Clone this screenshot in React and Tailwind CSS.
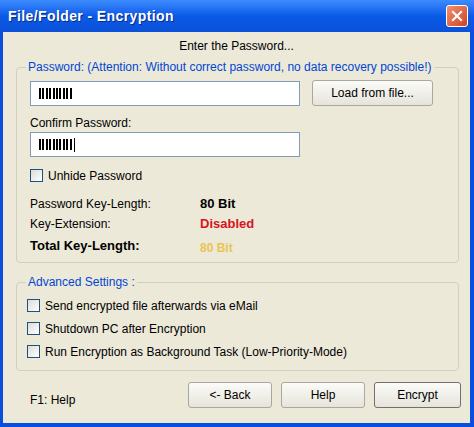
import React from "react";

function Checkbox() {
  return (
    <div className="w-[13px] h-[13px] shrink-0 border border-[#1c5180] bg-gradient-to-br from-[#dcdcd7] to-white" />
  );
}

function Masked({ count, caret }) {
  return (
    <div className="flex items-center gap-[1.4px]">
      {Array.from({ length: count }).map((_, i) => (
        <div key={i} className="w-[2px] h-[11px] bg-black" />
      ))}
      {caret && <div className="ml-[1px] w-[1px] h-[14px] bg-black" />}
    </div>
  );
}

function XpButton({ label, w, isDefault }) {
  return (
    <button
      className={`h-[26px] ${w} rounded-[3px] border ${
        isDefault ? "border-[#707070]" : "border-[#a8a8a0]"
      } bg-gradient-to-b from-[#fbfbf8] to-[#e6e4da] text-[12px] text-black`}
    >
      {label}
    </button>
  );
}

export default function App() {
  return (
    <div
      className="w-[474px] h-[427px] flex flex-col bg-[#0a4ee0] overflow-hidden text-black"
      style={{ fontFamily: '"Liberation Sans", Arial, sans-serif' }}
    >
      {/* title bar */}
      <div className="h-[32px] shrink-0 flex items-center justify-between pl-[8px] pr-[6px] bg-gradient-to-b from-[#3d8bff] via-[#0a5ae6] to-[#0b50d8]">
        <span className="text-white font-bold text-[14px] tracking-[0.4px] [text-shadow:1px_1px_0_#0a2a8a]">
          File/Folder - Encryption
        </span>
        <div className="w-[22px] h-[22px] rounded-[3px] border border-white bg-gradient-to-br from-[#f09070] to-[#d0401c] flex items-center justify-center">
          <svg width="12" height="12" viewBox="0 0 12 12">
            <path d="M2 2 L10 10 M10 2 L2 10" stroke="white" strokeWidth="2.2" strokeLinecap="square" />
          </svg>
        </div>
      </div>

      {/* body */}
      <div className="flex-1 ml-[3px] mr-[4px] mb-[4px] bg-[#ece9d8] flex flex-col text-[12px]">
        <div className="pt-[7px] leading-[14px] text-center">Enter the Password...</div>

        <fieldset className="mt-[7px] ml-[13px] w-[443px] border border-[#d0d0bf] rounded-[4px] pb-[7px]">
          <legend className="ml-[9px] px-[2px] leading-[14px] text-[#0046d5]">
            Password: (Attention: Without correct password, no data recovery possible!)
          </legend>
          <div className="pl-[13px] flex flex-col">
            <div className="mt-[6px] flex items-center gap-[12px]">
              <div className="w-[270px] h-[25px] border border-[#7f9db9] bg-white flex items-center pl-[8px]">
                <Masked count={10} />
              </div>
              <XpButton label="Load from file..." w="w-[121px]" />
            </div>
            <div className="mt-[10px] leading-[14px]">Confirm Password:</div>
            <div className="mt-[2px] w-[270px] h-[25px] border border-[#7f9db9] bg-white flex items-center pl-[8px]">
              <Masked count={10} caret />
            </div>
            <div className="mt-[12px] flex items-center gap-[5px] h-[13px]">
              <Checkbox />
              <span className="leading-[14px]">Unhide Password</span>
            </div>
            <div className="mt-[15px] flex flex-col gap-[6px] leading-[14px]">
              <div className="flex">
                <span className="w-[170px]">Password Key-Length:</span>
                <span className="font-bold text-[13px]">80 Bit</span>
              </div>
              <div className="flex">
                <span className="w-[170px]">Key-Extension:</span>
                <span className="font-bold text-[13px] text-[#d8141c]">Disabled</span>
              </div>
              <div className="flex pt-[2px]">
                <span className="w-[170px] font-bold text-[13px]">Total Key-Length:</span>
                <span className="font-bold text-[12px] text-[#e8c456] mt-[2px]">80 Bit</span>
              </div>
            </div>
          </div>
        </fieldset>

        <fieldset className="mt-[12px] ml-[13px] w-[443px] border border-[#d0d0bf] rounded-[4px] pb-[12px]">
          <legend className="ml-[9px] px-[2px] leading-[14px] text-[#0046d5]">Advanced Settings :</legend>
          <div className="pl-[10px] mt-[10px] flex flex-col gap-[10px]">
            {[
              "Send encrypted file afterwards via eMail",
              "Shutdown PC after Encryption",
              "Run Encryption as Background Task (Low-Priority-Mode)",
            ].map((t) => (
              <div key={t} className="flex items-center gap-[5px] h-[13px]">
                <Checkbox />
                <span className="leading-[14px]">{t}</span>
              </div>
            ))}
          </div>
        </fieldset>

        <div className="mt-[11px] flex items-center pr-[9px]">
          <span className="ml-[27px] mt-[10px] leading-[14px]">F1: Help</span>
          <div className="ml-auto flex gap-[9px]">
            <XpButton label="<- Back" w="w-[84px]" />
            <XpButton label="Help" w="w-[84px]" />
            <XpButton label="Encrypt" w="w-[87px]" isDefault />
          </div>
        </div>
      </div>
    </div>
  );
}
